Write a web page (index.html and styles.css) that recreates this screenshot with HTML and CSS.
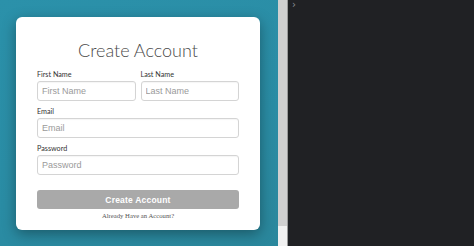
FILE: index.html
```html
<!DOCTYPE html>
<html>
<head>
<meta charset="utf-8">
<link rel="stylesheet" href="styles.css">
</head>
<body>
<div class="app">
  <div class="preview">
    <div class="card">
      <h1 class="title">Create Account</h1>
      <div class="row">
        <div class="field">
          <label class="label">First Name</label>
          <input class="input" placeholder="First Name">
        </div>
        <div class="field">
          <label class="label">Last Name</label>
          <input class="input" placeholder="Last Name">
        </div>
      </div>
      <div class="field">
        <label class="label">Email</label>
        <input class="input" placeholder="Email">
      </div>
      <div class="field">
        <label class="label">Password</label>
        <input class="input" placeholder="Password">
      </div>
      <button class="btn">Create Account</button>
      <div class="already">Already Have an Account?</div>
    </div>
  </div>
  <div class="scrollbar"><div class="thumb"></div><div class="track"></div></div>
  <div class="console">
    <span class="chev">›</span>
  </div>
</div>
</body>
</html>
```
FILE: styles.css
```css
html, body { margin: 0; padding: 0; height: 100%; }
body { overflow: hidden; }
.app { display: flex; height: 246px; width: 474px; }
.preview {
  width: 278px;
  flex: none;
  background: linear-gradient(160deg, #2b91aa 0%, #2a8ca4 60%, #2a879c 100%);
  padding: 17px 18px 0 16px;
  box-sizing: border-box;
}
.card {
  background: #fff;
  border-radius: 6px;
  box-shadow: 0 4px 14px rgba(0,0,0,0.35);
  height: 213px;
  box-sizing: border-box;
  padding: 21px 21px 0 21px;
  display: flex;
  flex-direction: column;
}
.title {
  margin: 0 0 7px 0;
  font-family: "Lato", "Open Sans", sans-serif;
  font-weight: 300;
  font-size: 18px;
  line-height: 24px;
  color: #4a4a4a;
  text-align: center;
}
.row { display: flex; gap: 5px; }
.row .field { flex: 1; min-width: 0; }
.field { display: flex; flex-direction: column; margin-bottom: 5px; }
.label {
  font-family: "Lato", "Open Sans", sans-serif;
  font-size: 7.2px;
  line-height: 12px;
  color: #333;
  margin-bottom: 0;
}
.input {
  height: 20px;
  box-sizing: border-box;
  border: 1px solid #d4d4d4;
  border-radius: 3px;
  padding: 0 4px;
  font-family: "Liberation Sans", Arial, sans-serif;
  font-size: 9px;
  color: #333;
  width: 100%;
  outline: none;
  box-shadow: inset 0 1px 1px rgba(0,0,0,0.04);
}
.input::placeholder { color: #9a9a9a; }
.btn {
  margin-top: 10px;
  height: 19px;
  border: none;
  border-radius: 3px;
  background: #a9a9a9;
  color: #fff;
  font-family: "Liberation Sans", Arial, sans-serif;
  font-weight: bold;
  font-size: 8.5px;
  letter-spacing: 0.2px;
  padding: 0;
}
.already {
  margin-top: 2px;
  text-align: center;
  font-family: "Liberation Serif", serif;
  font-size: 6.7px;
  line-height: 10px;
  color: #555;
}
.scrollbar {
  width: 10px;
  flex: none;
  display: flex;
  flex-direction: column;
  border-right: 1px solid #9a9a9a;
  box-sizing: border-box;
}
.thumb { height: 226px; background: #d0d0d0; }
.track { flex: 1; background: #f1f1f1; }
.console {
  flex: 1;
  background: #202124;
  position: relative;
}
.chev {
  position: absolute;
  left: 4px;
  top: -1px;
  color: #8a8f98;
  font-family: "DejaVu Sans", sans-serif;
  font-size: 10px;
}
```
